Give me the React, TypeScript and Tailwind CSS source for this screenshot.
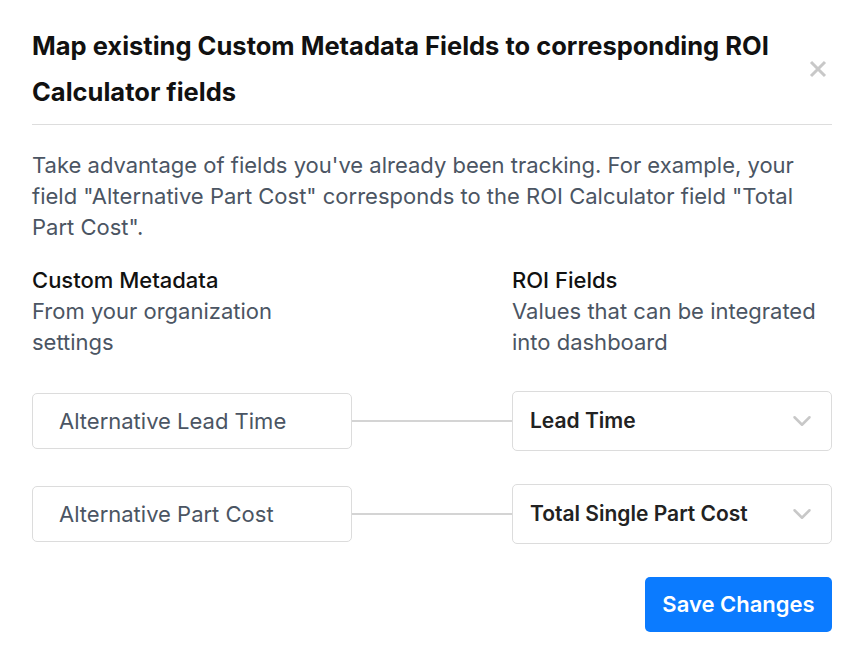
import { ChevronDown } from "lucide-react";

type MapRow = { source: string; target: string };

const rows: MapRow[] = [
  { source: "Alternative Lead Time", target: "Lead Time" },
  { source: "Alternative Part Cost", target: "Total Single Part Cost" },
];

export default function App() {
  return (
    <main className="min-h-[654px] w-[864px] bg-white px-8 font-['Inter',sans-serif]">
      <header className="relative border-b border-[#dddddd] pt-[23px] pb-[9px]">
        <h1 className="pr-12 text-[25.5px] leading-[46px] font-bold text-[#111111]">
          Map existing Custom Metadata Fields to corresponding ROI Calculator fields
        </h1>
        <button aria-label="Close" className="absolute top-[60px] right-[5px] p-0 text-[#c8c8c8]">
          <svg width="18" height="18" viewBox="0 0 18 18" fill="none" stroke="currentColor" strokeWidth="3">
            <path d="M2 2L16 16M16 2L2 16" />
          </svg>
        </button>
      </header>

      <p className="mt-[25px] text-[22px] leading-[31px] text-[#4b5563]">
        Take advantage of fields you've already been tracking. For example, your field "Alternative Part Cost"
        corresponds to the ROI Calculator field "Total Part Cost".
      </p>

      <div className="mt-[22px] grid grid-cols-[320px_320px] justify-between text-[22px] leading-[31px]">
        <div>
          <p className="font-medium text-[#111111]">Custom Metadata</p>
          <p className="text-[#4b5563]">From your organization settings</p>
        </div>
        <div>
          <p className="font-medium text-[#111111]">ROI Fields</p>
          <p className="text-[#4b5563]">Values that can be integrated into dashboard</p>
        </div>
      </div>

      <ul className="mt-[33px] space-y-[33px]">
        {rows.map((r) => (
          <li key={r.source} className="flex items-center">
            <div className="flex h-[56px] w-[320px] items-center rounded-[5px] border border-[#dcdcdc] pl-[26px] text-[22px] text-[#4b5563]">
              {r.source}
            </div>
            <div className="h-[2px] flex-1 bg-[#d4d4d4]" />
            <div className="flex h-[60px] w-[320px] items-center justify-between rounded-[5px] border border-[#dcdcdc] pr-[14px] pl-[17px] text-[21px] font-semibold text-[#222222]">
              <span>{r.target}</span>
              <ChevronDown className="h-[30px] w-[30px] text-[#c8c8c8]" strokeWidth={2} />
            </div>
          </li>
        ))}
      </ul>

      <div className="mt-[33px] flex justify-end">
        <button className="h-[55px] w-[187px] rounded-[5px] bg-[#0b7bff] text-[22px] font-semibold text-white">
          Save Changes
        </button>
      </div>
    </main>
  );
}
